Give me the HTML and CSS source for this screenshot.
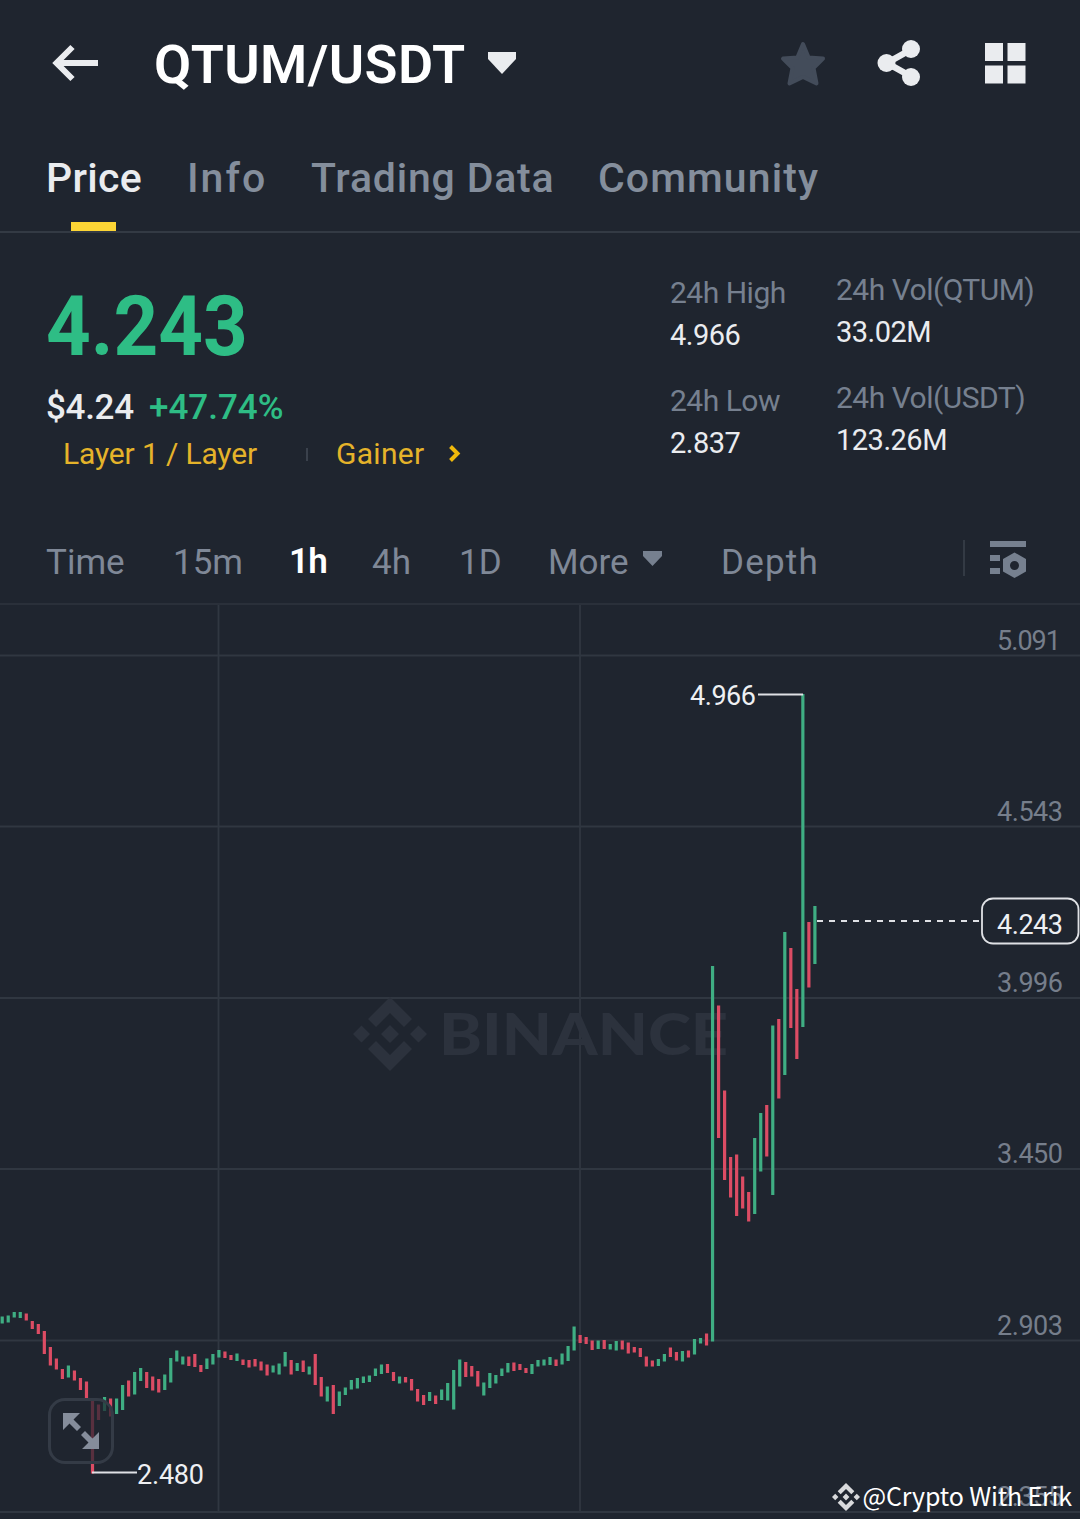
FILE: index.html
```
<!DOCTYPE html>
<html lang="en">

<head>
    <meta charset="UTF-8">
    <meta name="viewport" content="width=device-width, initial-scale=1.0">
    <title>QTUM/USDT</title>
    <link rel="stylesheet" href="styles.css">
</head>

<body>
    <header class="header">
        <svg class="icon-back" width="46" height="38" viewBox="0 0 46 38">
            <path d="M46 19H5M20.500 3L4.500 19l16 16" fill="none" stroke="#eaecef" stroke-width="6" />
        </svg>
        <h1 class="pair">QTUM/USDT</h1>
        <svg class="icon-caret" width="28" height="22" viewBox="0 0 28 22">
            <path d="M0 0h28v7L14 22 0 7z" fill="#eaecef" />
        </svg>
        <div class="header-actions">
            <svg class="icon-star" width="46" height="48" viewBox="0 0 46 48">
                <path d="M23 4l5.600 13.400L43 18.600 33.500 28l3 15.500L23 37 9.500 43.500l3-15.500L3 18.600l14.400-1.200z" fill="#434c5a" stroke="#434c5a" stroke-width="4" stroke-linejoin="round" />
            </svg>
            <svg width="44" height="48" viewBox="0 0 44 48">
                <path d="M35 10L10 24l25 14" fill="none" stroke="#eaecef" stroke-width="6.500" />
                <g fill="#eaecef">
                    <circle cx="34" cy="10" r="9" />
                    <circle cx="9.500" cy="24" r="9" />
                    <circle cx="34" cy="38" r="9" />
                </g>
            </svg>
            <svg width="41" height="41" viewBox="0 0 41 41">
                <path d="M0 0h18v18H0zM22.500 0h18v18h-18zM0 22.500h18v18H0zM22.500 22.500h18v18h-18z" fill="#eaecef" />
            </svg>
        </div>
    </header>

    <nav class="tabs">
        <a class="tab tab-price active">Price</a>
        <a class="tab tab-info">Info</a>
        <a class="tab tab-trading">Trading Data</a>
        <a class="tab tab-community">Community</a>
    </nav>

    <section class="summary">
        <div class="quote">
            <div class="last-price">4.243</div>
            <div class="change-row">
                <span class="fiat">$4.24</span>
                <span class="change">+47.74%</span>
            </div>
            <div class="tags">
                <span class="tag-layer">Layer 1 / Layer</span>
                <span class="tag-divider"></span>
                <span class="tag-gainer">Gainer</span>
                <svg width="12" height="18" viewBox="0 0 12 18">
                    <path d="M1.500 1.500l7 7-7 7" fill="none" stroke="#f0b90b" stroke-width="4" />
                </svg>
            </div>
        </div>
        <div class="stats">
            <div class="stat">
                <div class="stat-label">24h High</div>
                <div class="stat-value">4.966</div>
            </div>
            <div class="stat">
                <div class="stat-label">24h Low</div>
                <div class="stat-value">2.837</div>
            </div>
        </div>
        <div class="stats stats-volume">
            <div class="stat">
                <div class="stat-label">24h Vol(QTUM)</div>
                <div class="stat-value">33.02M</div>
            </div>
            <div class="stat">
                <div class="stat-label">24h Vol(USDT)</div>
                <div class="stat-value">123.26M</div>
            </div>
        </div>
    </section>

    <nav class="intervals">
        <span class="interval w-time">Time</span>
        <span class="interval w-15m">15m</span>
        <span class="interval w-1h active">1h</span>
        <span class="interval w-4h">4h</span>
        <span class="interval w-1d">1D</span>
        <span class="interval w-more">More
            <svg width="19" height="15" viewBox="0 0 19 15">
                <path d="M0 0h19v5L9.500 15 0 5z" fill="#76808f" />
            </svg>
        </span>
        <span class="interval w-depth">Depth</span>
        <div class="chart-settings">
            <svg width="36" height="37" viewBox="0 0 36 37">
                <g fill="#76808f">
                    <path d="M0 0h36v6H0zM0 14h10v6H0zM0 27h10v6H0z" />
                    <path fill-rule="evenodd" d="M24.500 11.500L36 18v12.500L24.500 37 13 30.500V18zM24.500 20a4.500 4.500 0 1 0 0 9 4.500 4.500 0 0 0 0-9z" />
                </g>
            </svg>
        </div>
    </nav>

    <main class="chart">
        <svg class="chart-canvas" width="1080" height="914" viewBox="0 605 1080 914">
            <defs>
                <g id="logo">
                    <path d="M37 0L59 22l-8 8-14-14-14 14-8-8zM37 74L15 52l8-8 14 14 14-14 8 8zM37 28l9 9-9 9-9-9zM8.500 28.500L17 37l-8.500 8.500L0 37zM65.500 28.500L74 37l-8.500 8.500L57 37z" />
                </g>
            </defs>
            <g class="grid">
                <path d="M0 655.500H1080M0 826.500H1080M0 998H1080M0 1169H1080M0 1340.500H1080M0 1512H1080" />
                <path d="M218.500 605V1512M580 605V1512" />
            </g>
            <g class="watermark">
                <use href="#logo" x="353" y="997" />
                <text x="439" y="1055" textLength="289" lengthAdjust="spacingAndGlyphs">BINANCE</text>
            </g>
            <g id="candles"></g>
            <g class="axis">
                <text x="997" y="650" textLength="64">5.091</text>
                <text x="997" y="821" textLength="66">4.543</text>
                <text x="997" y="992" textLength="66">3.996</text>
                <text x="997" y="1163" textLength="66">3.450</text>
                <text x="997" y="1335" textLength="66">2.903</text>
                <text x="997" y="1506" textLength="66">2.355</text>
            </g>
            <g class="markers">
                <path d="M758 694.500H803M92 1472.500H137" />
                <path d="M817 921H979" stroke-dasharray="6 6" />
                <rect x="982" y="898.500" width="96.500" height="45" rx="11" />
                <text x="690" y="705" textLength="66">4.966</text>
                <text x="137" y="1484" textLength="67">2.480</text>
                <text x="997" y="934" textLength="66">4.243</text>
            </g>
        </svg>
        <button class="expand">
            <svg width="36" height="36" viewBox="0 0 36 36">
                <path d="M0 0h17l-6.500 6.500L18 14l-4 4-7.500-7.500L0 17zM36 36H19l6.500-6.500L18 22l4-4 7.500 7.500L36 19z" fill="#858d9b" />
            </svg>
        </button>
        <div class="author">
            <svg width="28" height="28" viewBox="0 0 74 74" fill="#d9dadc">
                <use href="#logo" />
            </svg>
            <span>@Crypto With Erik</span>
        </div>
    </main>

    <script>
        // top, bottom of every bar; + is up, - is down
        const bars = `
            +1316.5,1323.5 +1315.5,1322.5 +1312,1317.5 +1312,1318 -1313.5,1320.5 -1321,1329 -1324,1334 -1331,1354
            -1347,1365.5 -1358.5,1369.5 -1369,1379 +1365.5,1377.5 -1370.5,1380.5 -1378,1390 -1381.5,1398 -1398,1473.5
            -1404.5,1420 +1397,1411 -1398.5,1416.5 +1398.5,1414 +1385,1410 -1380.5,1396.5 +1372,1394.5 +1368,1381
            -1372,1388 -1376.5,1390.5 -1379,1392.5 +1374.5,1390 +1358,1382.5 +1350.5,1361.5 +1356.5,1364.5 -1356.5,1366
            -1354,1367 -1365,1372 +1358.5,1369 +1354,1364.5 +1350,1357.5 -1351.5,1358 -1355,1360 +1353.5,1361
            -1359.5,1365 -1360,1367.5 -1359,1366.5 -1361.5,1370.5 -1364.5,1375.5 +1365.5,1372.5 +1363.5,1374.5 +1352,1366.5
            -1360,1374.5 +1363,1371 -1360.5,1372 +1366.5,1374.5 -1354,1385 -1377,1396.5 +1386.5,1401.5 -1385,1414
            +1391.5,1406 +1387.5,1395 +1380,1389.5 +1378,1388.5 +1376.5,1383 +1375.5,1382 +1368.5,1376 +1364.5,1374
            -1364,1373 -1372,1381 +1376.5,1383.5 -1377,1382.5 -1379,1390.5 -1389,1401.5 -1395,1405 +1392,1401
            -1395.5,1404 +1389.5,1400 +1383,1400.5 +1370,1409.5 +1359.5,1386.5 -1362,1377 -1366,1376.5 -1371,1386.5
            +1382.5,1395.5 +1373,1388 +1375,1383.5 +1368.5,1376 +1363,1372.5 -1362.5,1371 -1364,1370 -1368,1373
            +1364,1374 +1360,1366.5 +1359.5,1365.5 +1357,1365 -1359.5,1366 +1353.5,1364.5 +1346,1361 +1326.5,1350.5
            -1335,1343 -1337,1344 -1340.5,1350 +1340.5,1349 -1340,1349 +1344,1349.5 +1341,1350.5 -1340.5,1349.5
            -1342.5,1353.5 -1347,1352.5 -1348,1357 -1356.5,1366.5 -1360.5,1366.5 +1359,1366 +1354,1361.5 -1347.5,1357
            -1352,1360.5 +1351,1361.5 -1350.5,1357.5 +1339,1354.5 +1338,1343.5 -1333.5,1345.5 +966,1341.5 -1005.5,1138
            -1090.5,1180 -1157,1197.5 -1154.5,1216 -1176.5,1208.5 -1192,1221.5 +1138,1214 +1113,1171.5 -1105,1156.5
            +1025.5,1195 -1019,1098.5 +932,1075 -948,1028 -989,1059 +694,1027 -922,987.5 +906,964`;

        const group = document.getElementById('candles');

        bars.trim().split(/\s+/).forEach((bar, i) => {
            const [top, bottom] = bar.slice(1).split(',').map(Number);
            const rect = document.createElementNS('http://www.w3.org/2000/svg', 'rect');
            rect.setAttribute('class', bar[0] === '+' ? 'up' : 'down');
            rect.setAttribute('x', (0.6 + i * 6.02).toFixed(2));
            rect.setAttribute('y', top);
            rect.setAttribute('width', 3.2);
            rect.setAttribute('height', bottom - top);
            group.appendChild(rect);
        });
    </script>
</body>

</html>
```
FILE: styles.css
```
* {
    margin: 0;
    padding: 0;
    box-sizing: border-box;
}

body {
    width: 1080px;
    height: 1519px;
    overflow: hidden;
    background: #1f252f;
    color: #eaecef;
    font-family: Roboto, "Liberation Sans", sans-serif;
}

svg {
    display: block;
}

.header {
    display: flex;
    align-items: center;
    height: 128px;
    padding: 0 54px 2px 52px;
}

.pair {
    width: 312px;
    margin: 4px 22px 0 56px;
    color: #fff;
    font-size: 54px;
    font-weight: 600;
    line-height: 64px;
    letter-spacing: 0.4px;
    white-space: nowrap;
}

.header-actions {
    display: flex;
    align-items: center;
    margin-left: auto;
}

.header-actions svg + svg {
    margin-left: 51px;
}

.header-actions .icon-star {
    margin-top: 2px;
}

.header-actions svg:last-child {
    margin-left: 64px;
}

.tabs {
    display: flex;
    height: 105px;
    padding-left: 46px;
    border-bottom: 2px solid #333a44;
}

.tab {
    position: relative;
    color: #848e9c;
    font-size: 41px;
    font-weight: 500;
    line-height: 100px;
    letter-spacing: 0.8px;
    white-space: nowrap;
}

.tab-price {
    width: 141px;
    letter-spacing: 0.3px;
}

.tab-info {
    width: 124px;
    letter-spacing: 2px;
}

.tab-trading {
    width: 287px;
}

.tab-community {
    letter-spacing: 1.1px;
}

.tab.active {
    color: #eaecef;
}

.tab.active::after {
    content: "";
    position: absolute;
    left: 25px;
    bottom: 0;
    width: 45px;
    height: 9px;
    background: #fcd535;
}

.summary {
    display: flex;
    height: 287px;
}

.quote {
    width: 670px;
    padding: 49px 0 0 46px;
}

.last-price {
    color: #2ebd85;
    font-size: 83px;
    font-weight: 700;
    line-height: 90px;
    transform: scaleX(0.94);
    transform-origin: left;
}

.change-row {
    display: flex;
    margin-top: 14px;
    font-size: 35px;
    font-weight: 500;
    line-height: 44px;
}

.fiat {
    width: 103px;
    letter-spacing: -0.3px;
}

.change {
    color: #2ebd85;
}

.tags {
    display: flex;
    align-items: center;
    margin-top: 2px;
    padding-left: 17px;
    color: #e5b32a;
    font-size: 30px;
    line-height: 44px;
}

.tag-layer {
    width: 243px;
    letter-spacing: -0.15px;
}

.tag-divider {
    width: 2px;
    height: 13px;
    margin-right: 28px;
    background: #3a414c;
}

.tag-gainer {
    width: 113px;
    letter-spacing: 0.3px;
}

.stats {
    width: 166px;
    padding-top: 39px;
    font-size: 30px;
    line-height: 42px;
    letter-spacing: -0.5px;
    white-space: nowrap;
}

.stats-volume {
    width: 220px;
    padding-top: 36px;
}

.stat {
    margin-bottom: 24px;
}

.stat-label {
    color: #76808f;
}

.stat-value {
    font-size: 29px;
}

.intervals {
    display: flex;
    height: 85px;
    padding-left: 46px;
    border-bottom: 2px solid #2a303a;
    color: #7f8897;
    font-size: 35px;
    line-height: 86px;
}

.interval.active {
    color: #fff;
    font-weight: 600;
    line-height: 84px;
    letter-spacing: -0.8px;
}

.w-time {
    width: 127px;
}

.w-15m {
    width: 116px;
}

.w-1h {
    width: 83px;
}

.w-4h {
    width: 87px;
}

.w-1d {
    width: 89px;
}

.w-more {
    display: flex;
    justify-content: space-between;
    width: 114px;
    margin-right: 59px;
}

.w-more svg {
    margin-top: 31px;
}

.w-depth {
    letter-spacing: 1.2px;
}

.chart-settings {
    height: 36px;
    margin: 20px 54px 0 auto;
    padding: 1px 0 0 25px;
    border-left: 2px solid #333a44;
}

.chart {
    position: relative;
    height: 914px;
}

.grid {
    fill: none;
    stroke: #303741;
    stroke-width: 1.8;
}

.watermark {
    fill: #2c323d;
    font-family: Lato, sans-serif;
    font-size: 57px;
    font-weight: 900;
}

.up {
    fill: #3fae83;
}

.down {
    fill: #dc4c64;
}

.axis {
    fill: #767e8b;
    font-size: 27px;
}

.markers {
    fill: none;
    stroke: #dfe1e5;
    stroke-width: 1.8;
    font-size: 27px;
}

.markers rect {
    fill: #1f252f;
}

.markers text {
    fill: #eef0f3;
    stroke: none;
}

.expand {
    position: absolute;
    left: 48px;
    top: 793px;
    width: 66px;
    height: 66px;
    padding: 12px;
    border: 3px solid #343b46;
    border-radius: 17px;
    background: rgba(31, 37, 47, 0.7);
}

.author {
    position: absolute;
    right: 8px;
    bottom: 6px;
    display: flex;
    align-items: center;
    gap: 3px;
    color: #fff;
    font-family: "Noto Sans CJK SC", sans-serif;
    font-size: 25px;
    line-height: 36px;
    letter-spacing: -0.15px;
    white-space: nowrap;
}

.author span {
    margin-top: -3px;
}
```
